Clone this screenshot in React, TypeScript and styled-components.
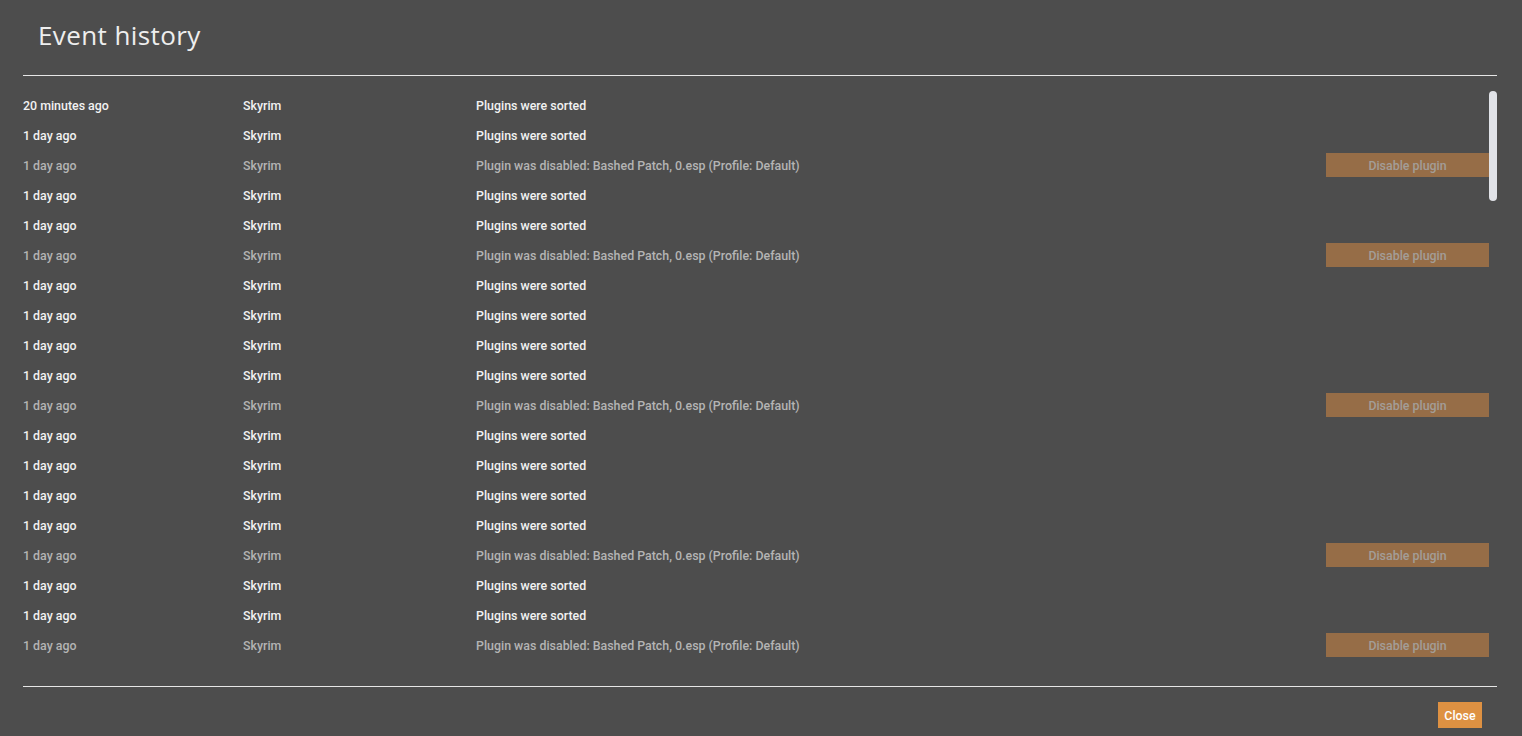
import React from "react";
import styled, { createGlobalStyle } from "styled-components";

const GlobalStyle = createGlobalStyle`
  html, body {
    margin: 0;
    padding: 0;
    background: #4d4d4d;
    height: 100%;
    overflow: hidden;
  }
  * { box-sizing: border-box; }
`;

const Dialog = styled.div`
  display: flex;
  flex-direction: column;
  width: 1522px;
  height: 736px;
  padding: 0 25px 0 23px;
  background: #4d4d4d;
  font-family: Roboto, "Liberation Sans", sans-serif;
`;

const Header = styled.div`
  height: 75px;
  padding: 15px 0 0 15px;
`;

const Title = styled.h1`
  margin: 0;
  font-family: "Open Sans", "Liberation Sans", sans-serif;
  font-weight: 500;
  font-size: 26px;
  letter-spacing: 0.4px;
  line-height: 40px;
  color: #eeeeee;
`;

const Rule = styled.div<{ $after: number }>`
  height: 1px;
  background: #e6e6e6;
  margin-bottom: ${(p) => p.$after}px;
  flex: none;
`;

const ListFrame = styled.div`
  display: flex;
  height: 580px;
  margin-bottom: 16px;
`;

const List = styled.div`
  flex: 1;
  overflow: hidden;
`;

const ScrollTrack = styled.div`
  width: 8px;
  flex: none;
  padding-top: 1px;
`;

const ScrollThumb = styled.div`
  height: 110px;
  border-radius: 4px;
  background: #e1e3e8;
`;

const Row = styled.div<{ $muted: boolean }>`
  display: grid;
  grid-template-columns: 220px 233px 1fr 163px;
  align-items: center;
  height: 30px;
  font-size: 12.4px;
  font-weight: 500;
  color: ${(p) => (p.$muted ? "#b4b4b4" : "#f2f2f2")};
`;

const Cell = styled.div`
  white-space: nowrap;
  overflow: hidden;
`;

const DisableButton = styled.button`
  height: 24px;
  border: none;
  background: #966d47;
  color: #a39d97;
  font-family: Roboto, "Liberation Sans", sans-serif;
  font-size: 12.4px;
  font-weight: 500;
  padding: 0;
  cursor: default;
`;

const Footer = styled.div`
  display: flex;
  justify-content: flex-end;
  padding-right: 15px;
`;

const CloseButton = styled.button`
  width: 44px;
  height: 26px;
  border: none;
  background: #de9142;
  color: #ffffff;
  font-family: Roboto, "Liberation Sans", sans-serif;
  font-size: 12.4px;
  font-weight: 500;
  padding: 0;
`;

type Event = { time: string; game: string; disabled: boolean };

const disabledIdx = new Set([2, 5, 10, 15, 18, 22, 27, 33, 40, 47, 55, 62, 70, 78, 86, 94]);

const events: Event[] = Array.from({ length: 102 }, (_, i) => ({
  time: i === 0 ? "20 minutes ago" : "1 day ago",
  game: "Skyrim",
  disabled: disabledIdx.has(i),
}));

export default function App() {
  return (
    <>
      <GlobalStyle />
      <Dialog>
        <Header>
          <Title>Event history</Title>
        </Header>
        <Rule $after={14} />
        <ListFrame>
          <List>
            {events.map((e, i) => (
              <Row key={i} $muted={e.disabled}>
                <Cell>{e.time}</Cell>
                <Cell>{e.game}</Cell>
                <Cell>
                  {e.disabled
                    ? "Plugin was disabled: Bashed Patch, 0.esp (Profile: Default)"
                    : "Plugins were sorted"}
                </Cell>
                {e.disabled ? <DisableButton>Disable plugin</DisableButton> : <span />}
              </Row>
            ))}
          </List>
          <ScrollTrack>
            <ScrollThumb />
          </ScrollTrack>
        </ListFrame>
        <Rule $after={15} />
        <Footer>
          <CloseButton>Close</CloseButton>
        </Footer>
      </Dialog>
    </>
  );
}
